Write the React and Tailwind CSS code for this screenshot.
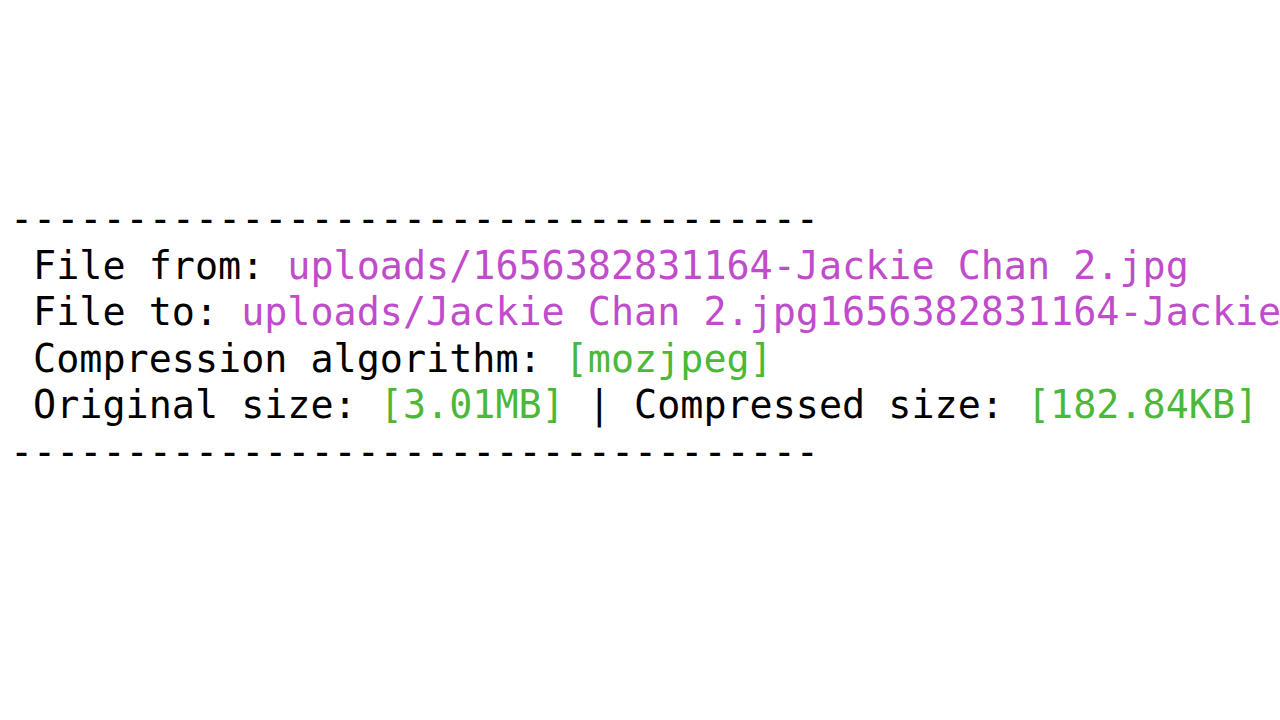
import React from "react";

const magenta = "text-[#c04ccc]";
const green = "text-[#4cb83a]";

export default function App() {
  const dashes = "-".repeat(35);
  return (
    <div className="w-[1280px] h-[720px] bg-white overflow-hidden">
      <div className="pt-[196px] pl-[10px] font-['DejaVu_Sans_Mono','Liberation_Mono',monospace] text-[38.4px] leading-[46.5px] text-black whitespace-pre">
        <div>{dashes}</div>
        <div>
          {" File from: "}
          <span className={magenta}>uploads/1656382831164-Jackie Chan 2.jpg</span>
        </div>
        <div>
          {" File to: "}
          <span className={magenta}>
            uploads/Jackie Chan 2.jpg1656382831164-Jackie Chan 2.jpg
          </span>
        </div>
        <div>
          {" Compression algorithm: "}
          <span className={green}>[mozjpeg]</span>
        </div>
        <div>
          {" Original size: "}
          <span className={green}>[3.01MB]</span>
          {" | Compressed size: "}
          <span className={green}>[182.84KB]</span>
        </div>
        <div>{dashes}</div>
      </div>
    </div>
  );
}
